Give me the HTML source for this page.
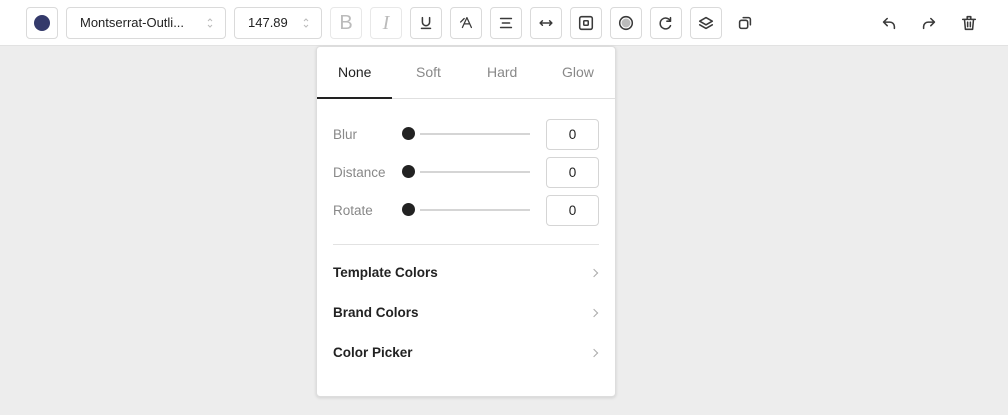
<!DOCTYPE html>
<html><head><style>
*{box-sizing:border-box;margin:0;padding:0}
body{width:1008px;height:415px;background:#ededed;font-family:"Liberation Sans",sans-serif;position:relative;overflow:hidden}
.tb{position:absolute;left:0;top:0;width:1008px;height:46px;background:#fff;border-bottom:1px solid #e2e2e2}
.b{position:absolute;top:7px;width:32px;height:32px;border:1px solid #dadada;border-radius:4px;display:flex;align-items:center;justify-content:center;color:#333}
.b svg{width:18px;height:18px;fill:none;stroke:#3a3a3a;stroke-width:1.7;stroke-linecap:round;stroke-linejoin:round}
.sel{position:absolute;top:7px;height:32px;border:1px solid #dadada;border-radius:4px;font-size:13px;color:#222;line-height:30px;padding-left:13px}
.car{position:absolute;right:12px;top:9px;width:6px;height:12px}
.pn{position:absolute;left:316px;top:46px;width:300px;height:351px;background:#fff;border:1px solid #ddd;border-radius:4px;box-shadow:0 1px 3px rgba(0,0,0,.12)}
.tab{position:absolute;top:17px;font-size:14px;color:#888}
.row{position:absolute;left:16px;font-size:13.5px;color:#888}
.sl{position:absolute;left:103px;width:110px;height:2px;background:#d5d5d5}
.dot{position:absolute;left:85px;width:13px;height:13px;border-radius:50%;background:#222}
.in{position:absolute;left:229px;width:53px;height:31px;border:1px solid #d5d5d5;border-radius:4px;font-size:13.5px;color:#222;text-align:center;line-height:29px}
.it{position:absolute;left:16px;font-size:13.5px;font-weight:bold;color:#222}
.ch{position:absolute;left:274px;width:6px;height:6px;border-right:1.5px solid #aaa;border-top:1.5px solid #aaa;transform:rotate(45deg)}
</style></head><body>
<div class="tb">
<div class="b" style="left:26px"><div style="width:16px;height:16px;border-radius:50%;background:#343a6b"></div></div>
<div class="sel" style="left:66px;width:160px">Montserrat-Outli...<svg class="car" viewBox="0 0 6 12"><path d="M1 4L3 2L5 4M1 8L3 10L5 8" stroke="#bbb" fill="none"/></svg></div>
<div class="sel" style="left:234px;width:88px">147.89<svg class="car" viewBox="0 0 6 12"><path d="M1 4L3 2L5 4M1 8L3 10L5 8" stroke="#bbb" fill="none"/></svg></div>
<div class="b" style="left:330px;border-color:#e8e8e8;color:#bbb;font-size:20px">B</div>
<div class="b" style="left:370px;border-color:#e8e8e8;color:#bbb;font-size:20px;font-family:'Liberation Serif';font-style:italic">I</div>
<div class="b" style="left:410px"><svg viewBox="0 0 20 20"><path d="M6 4v5a4 4 0 0 0 8 0V4M5 16h10"/></svg></div>
<div class="b" style="left:450px"><svg viewBox="0 0 20 20" style="stroke-width:1.4"><path d="M6 15L11 4L16 15M8 11h6M4 9l4-4"/></svg></div>
<div class="b" style="left:490px"><svg viewBox="0 0 20 20"><path d="M4 5h12M6 10h8M4 15h12"/></svg></div>
<div class="b" style="left:530px"><svg viewBox="0 0 20 20"><path d="M4 10h12M6 7.5L3.5 10 6 12.5M14 7.5l2.5 2.5-2.5 2.5"/></svg></div>
<div class="b" style="left:570px"><svg viewBox="0 0 20 20"><rect x="3" y="3" width="14" height="14" rx="2"/><rect x="7.5" y="7.5" width="5" height="5" rx="1"/></svg></div>
<div class="b" style="left:610px"><svg viewBox="0 0 20 20"><circle cx="10" cy="10" r="7"/><circle cx="10" cy="10" r="5" fill="#bbb" stroke="none"/></svg></div>
<div class="b" style="left:650px"><svg viewBox="0 0 20 20"><path d="M15 8a6 6 0 1 0 0 5M15 4v4h-4"/></svg></div>
<div class="b" style="left:690px"><svg viewBox="0 0 20 20"><path d="M10 4l7 4-7 4-7-4zM3 12l7 4 7-4"/></svg></div>
<div class="b" style="left:729px;border:none"><svg viewBox="0 0 20 20"><rect x="4" y="7" width="9" height="9" rx="2"/><path d="M8 4h6a2 2 0 0 1 2 2v6"/></svg></div>
<div class="b" style="left:873px;border:none"><svg viewBox="0 0 20 20"><path d="M8 5L4 9l4 4M4 9h7a5 5 0 0 1 5 5v2"/></svg></div>
<div class="b" style="left:913px;border:none"><svg viewBox="0 0 20 20"><path d="M12 5l4 4-4 4M16 9H9a5 5 0 0 0-5 5v2"/></svg></div>
<div class="b" style="left:953px;border:none"><svg viewBox="0 0 20 20"><path d="M3 6h14M8 6V3h4v3M5 6l1 11h8l1-11M8.5 9v5M11.5 9v5"/></svg></div>
</div>
<div class="pn">
<div class="tab" style="left:21px;color:#222">None</div>
<div class="tab" style="left:99px">Soft</div>
<div class="tab" style="left:170px">Hard</div>
<div class="tab" style="left:245px">Glow</div>
<div style="position:absolute;left:0;top:51px;width:298px;height:1px;background:#e0e0e0"></div>
<div style="position:absolute;left:0;top:50px;width:75px;height:2px;background:#222"></div>
<div class="row" style="top:80px">Blur</div><div class="dot" style="top:80px"></div><div class="sl" style="top:86px"></div><div class="in" style="top:72px">0</div>
<div class="row" style="top:118px">Distance</div><div class="dot" style="top:118px"></div><div class="sl" style="top:124px"></div><div class="in" style="top:110px">0</div>
<div class="row" style="top:156px">Rotate</div><div class="dot" style="top:156px"></div><div class="sl" style="top:162px"></div><div class="in" style="top:148px">0</div>
<div style="position:absolute;left:16px;top:197px;width:266px;height:1px;background:#e2e2e2"></div>
<div class="it" style="top:218px">Template Colors</div><div class="ch" style="top:223px"></div>
<div class="it" style="top:258px">Brand Colors</div><div class="ch" style="top:263px"></div>
<div class="it" style="top:298px">Color Picker</div><div class="ch" style="top:303px"></div>
</div>
</body></html>
